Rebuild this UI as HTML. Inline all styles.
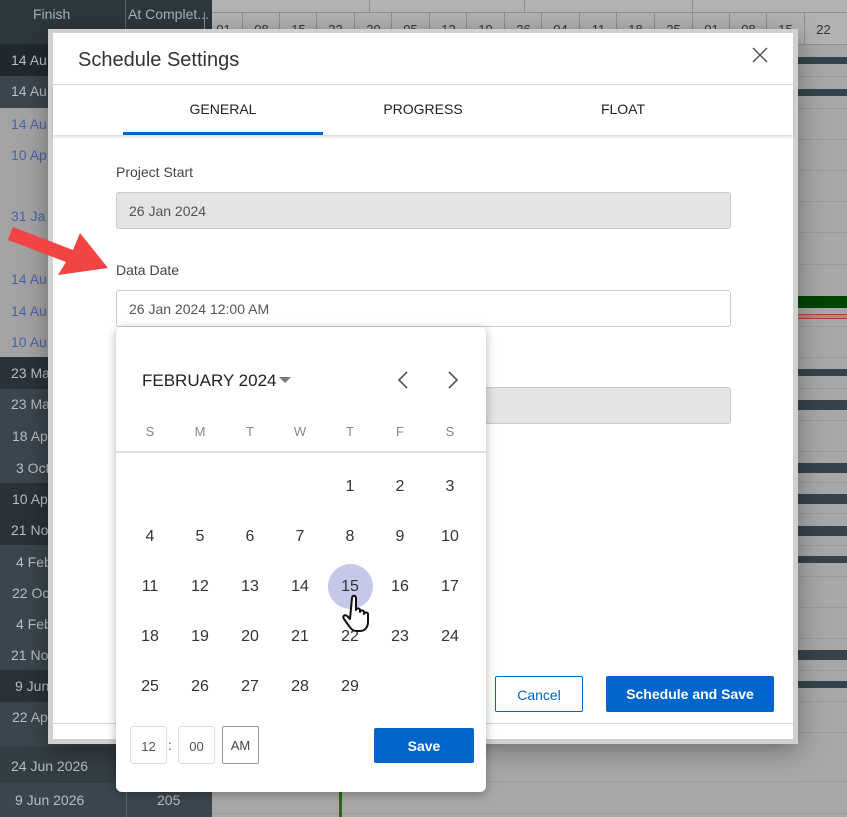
<!DOCTYPE html>
<html><head><meta charset="utf-8"><style>
*{box-sizing:border-box;margin:0;padding:0}
body{width:847px;height:817px;overflow:hidden;position:relative;background:#a7a7a7;font-family:"Liberation Sans",sans-serif}
.abs{position:absolute}
.lt{color:#b9bfc3;font-size:14px;position:absolute;white-space:nowrap}
.bl{color:#4a62a6}
.hl{position:absolute;left:212px;right:0;height:1px;background:#9a9a9a}
.bar{position:absolute;left:797px;right:0;background:#36434c}
.dh{position:absolute;top:12px;height:33px;border-left:1px solid #8f8f8f;font-size:13px;color:#333;text-align:center;padding-top:10px;width:38px}
.cal{position:absolute;font-size:16px;color:#333;width:40px;text-align:center}
</style></head><body>
<div class="abs" style="left:0;top:0;width:212px;height:817px;background:#3a454d"></div>
<div class="abs" style="left:0;top:0;width:212px;height:44px;background:#2d373e"></div>
<div class="abs" style="left:125px;top:0;width:1px;height:44px;background:#59646b"></div>
<div class="lt" style="left:33px;top:6px;color:#a9b1b6">Finish</div>
<div class="lt" style="left:128px;top:6px;color:#a9b1b6">At Complet...</div>
<div class="abs" style="left:0;top:44px;width:212px;height:32px;background:#22292e"></div>
<div class="abs" style="left:0;top:108px;width:212px;height:249px;background:#a3a3a3"></div>
<div class="abs" style="left:0;top:357px;width:212px;height:32px;background:#2a3238"></div>
<div class="abs" style="left:0;top:483px;width:212px;height:62px;background:#2a3238"></div>
<div class="abs" style="left:0;top:670px;width:212px;height:32px;background:#2a3238"></div>
<div class="abs" style="left:0;top:747px;width:212px;height:36px;background:#333d44"></div>
<div class="abs" style="left:126px;top:783px;width:1px;height:34px;background:#59646b"></div>
<div class="lt" style="left:11px;top:52px">14 Au</div>
<div class="lt" style="left:11px;top:83px">14 Au</div>
<div class="lt bl" style="left:11px;top:116px">14 Au</div>
<div class="lt bl" style="left:11px;top:147px">10 Ap</div>
<div class="lt bl" style="left:11px;top:208px">31 Ja</div>
<div class="lt bl" style="left:11px;top:271px">14 Au</div>
<div class="lt bl" style="left:11px;top:303px">14 Au</div>
<div class="lt bl" style="left:11px;top:334px">10 Au</div>
<div class="lt" style="left:11px;top:365px">23 Ma</div>
<div class="lt" style="left:11px;top:396px">23 Ma</div>
<div class="lt" style="left:12px;top:428px">18 Ap</div>
<div class="lt" style="left:16px;top:460px">3 Oct</div>
<div class="lt" style="left:12px;top:491px">10 Ap</div>
<div class="lt" style="left:11px;top:522px">21 No</div>
<div class="lt" style="left:16px;top:554px">4 Feb</div>
<div class="lt" style="left:12px;top:585px">22 Oc</div>
<div class="lt" style="left:16px;top:616px">4 Feb</div>
<div class="lt" style="left:11px;top:647px">21 No</div>
<div class="lt" style="left:15px;top:678px">9 Jun</div>
<div class="lt" style="left:12px;top:709px">22 Ap</div>
<div class="lt" style="left:11px;top:758px">24 Jun 2026</div>
<div class="lt" style="left:15px;top:792px">9 Jun 2026</div>
<div class="lt" style="left:157px;top:792px">205</div>
<div class="abs" style="left:212px;top:0;right:0;height:45px;background:#b2b2b2;border-bottom:1px solid #8f8f8f"></div>
<div class="abs" style="left:212px;top:12px;right:0;height:1px;background:#8f8f8f"></div>
<div class="abs" style="left:369px;top:0;width:1px;height:12px;background:#8f8f8f"></div>
<div class="abs" style="left:524px;top:0;width:1px;height:12px;background:#8f8f8f"></div>
<div class="abs" style="left:692px;top:0;width:1px;height:12px;background:#8f8f8f"></div>
<div class="dh" style="left:204px">01</div><div class="dh" style="left:242px">08</div><div class="dh" style="left:279px">15</div><div class="dh" style="left:316px">22</div><div class="dh" style="left:354px">29</div><div class="dh" style="left:391px">05</div><div class="dh" style="left:429px">12</div><div class="dh" style="left:466px">19</div><div class="dh" style="left:504px">26</div><div class="dh" style="left:541px">04</div><div class="dh" style="left:579px">11</div><div class="dh" style="left:616px">18</div><div class="dh" style="left:654px">25</div><div class="dh" style="left:692px">01</div><div class="dh" style="left:729px">08</div><div class="dh" style="left:766px">15</div><div class="dh" style="left:804px">22</div>
<div class="hl" style="top:76px"></div><div class="hl" style="top:108px"></div><div class="hl" style="top:139px"></div><div class="hl" style="top:170px"></div><div class="hl" style="top:201px"></div><div class="hl" style="top:232px"></div><div class="hl" style="top:264px"></div><div class="hl" style="top:326px"></div><div class="hl" style="top:357px"></div><div class="hl" style="top:388px"></div><div class="hl" style="top:420px"></div><div class="hl" style="top:451px"></div><div class="hl" style="top:482px"></div><div class="hl" style="top:513px"></div><div class="hl" style="top:545px"></div><div class="hl" style="top:576px"></div><div class="hl" style="top:607px"></div><div class="hl" style="top:638px"></div><div class="hl" style="top:670px"></div><div class="hl" style="top:701px"></div><div class="hl" style="top:732px"></div><div class="hl" style="top:781px"></div><div class="hl" style="top:813px"></div>
<div class="bar" style="top:57px;height:7px"></div>
<div class="bar" style="top:89px;height:7px"></div>
<div class="abs" style="left:797px;right:0;top:296px;height:12px;background:#004400"></div>
<div class="abs" style="left:797px;right:0;top:314px;height:5px;background:#a89070;border-top:1px solid #b04040;border-bottom:1px solid #b04040"></div>
<div class="bar" style="top:369px;height:7px"></div>
<div class="bar" style="top:400px;height:10px"></div>
<div class="bar" style="top:463px;height:10px"></div>
<div class="bar" style="top:494px;height:10px"></div>
<div class="bar" style="top:526px;height:10px"></div>
<div class="bar" style="top:556px;height:7px"></div>
<div class="bar" style="top:650px;height:10px"></div>
<div class="bar" style="top:681px;height:7px"></div>
<div class="abs" style="left:339px;top:785px;width:3px;height:32px;background:#0a7a1a"></div>
<!-- modal -->
<div class="abs" style="left:48px;top:29px;width:750px;height:715px;background:#d0d0d0;box-shadow:0 6px 24px rgba(0,0,0,.35)"></div>
<div class="abs" style="left:53px;top:33px;width:740px;height:706px;background:#fff"></div>
<div class="abs" style="left:78px;top:49px;font-size:20px;color:#333">Schedule Settings</div>
<svg class="abs" style="left:752px;top:47px" width="16" height="16"><path d="M1 1L15 15M15 1L1 15" stroke="#555" stroke-width="1.5"/></svg>
<div class="abs" style="left:53px;top:84px;width:740px;height:1px;background:#d6d6d6"></div>
<div class="abs" style="left:53px;top:85px;width:740px;height:50px;box-shadow:0 2px 3px rgba(0,0,0,.15);background:#fff"></div>
<div class="abs" style="left:123px;top:101px;width:200px;text-align:center;font-size:14px;color:#222">GENERAL</div>
<div class="abs" style="left:323px;top:101px;width:200px;text-align:center;font-size:14px;color:#222">PROGRESS</div>
<div class="abs" style="left:523px;top:101px;width:200px;text-align:center;font-size:14px;color:#222">FLOAT</div>
<div class="abs" style="left:123px;top:132px;width:200px;height:3px;background:#0066cc"></div>
<div class="abs" style="left:116px;top:164px;font-size:14px;color:#444">Project Start</div>
<div class="abs" style="left:116px;top:192px;width:615px;height:37px;background:#e4e4e4;border:1px solid #ccc;border-radius:3px;font-size:14px;color:#555;padding:10px 12px">26 Jan 2024</div>
<div class="abs" style="left:116px;top:262px;font-size:14px;color:#444">Data Date</div>
<div class="abs" style="left:116px;top:290px;width:615px;height:37px;background:#fff;border:1px solid #ccc;border-radius:3px;font-size:14px;color:#555;padding:10px 12px">26 Jan 2024 12:00 AM</div>
<div class="abs" style="left:300px;top:387px;width:431px;height:37px;background:#e4e4e4;border:1px solid #ccc;border-radius:3px"></div>
<div class="abs" style="left:495px;top:676px;width:88px;height:36px;border:1px solid #0066cc;border-radius:2px;color:#0066cc;font-size:14px;text-align:center;padding-top:10px">Cancel</div>
<div class="abs" style="left:606px;top:676px;width:168px;height:36px;background:#0066cc;border-radius:2px;color:#fff;font-size:14px;font-weight:bold;text-align:center;padding-top:10px">Schedule and Save</div>
<div class="abs" style="left:53px;top:723px;width:740px;height:1px;background:#d6d6d6"></div>
<!-- arrow -->
<svg class="abs" style="left:0;top:220px" width="120" height="70"><polygon points="13,7 73,30 80,13 108,48 58,55 66,42 8,20" fill="#f24444"/></svg>
<!-- calendar -->
<div class="abs" style="left:116px;top:327px;width:370px;height:465px;background:#fff;border-radius:6px;box-shadow:0 2px 10px rgba(0,0,0,.3)"></div>
<div class="abs" style="left:142px;top:371px;font-size:17px;color:#222">FEBRUARY 2024</div>
<svg class="abs" style="left:279px;top:377px" width="12" height="8"><path d="M0 0H12L6 6Z" fill="#777"/></svg>
<svg class="abs" style="left:397px;top:371px" width="12" height="18"><path d="M10 1L2 9L10 17" stroke="#555" stroke-width="1.6" fill="none"/></svg>
<svg class="abs" style="left:447px;top:371px" width="12" height="18"><path d="M2 1L10 9L2 17" stroke="#555" stroke-width="1.6" fill="none"/></svg>
<div class="cal" style="left:130px;top:424px;font-size:13px;color:#888">S</div><div class="cal" style="left:180px;top:424px;font-size:13px;color:#888">M</div><div class="cal" style="left:230px;top:424px;font-size:13px;color:#888">T</div><div class="cal" style="left:280px;top:424px;font-size:13px;color:#888">W</div><div class="cal" style="left:330px;top:424px;font-size:13px;color:#888">T</div><div class="cal" style="left:380px;top:424px;font-size:13px;color:#888">F</div><div class="cal" style="left:430px;top:424px;font-size:13px;color:#888">S</div>
<div class="abs" style="left:116px;top:451px;width:370px;height:2px;background:#e0e0e0"></div>
<div class="abs" style="left:328px;top:564px;width:45px;height:45px;border-radius:50%;background:#c5c8e8"></div>
<div class="cal" style="left:330px;top:478px">1</div><div class="cal" style="left:380px;top:478px">2</div><div class="cal" style="left:430px;top:478px">3</div>
<div class="cal" style="left:130px;top:528px">4</div><div class="cal" style="left:180px;top:528px">5</div><div class="cal" style="left:230px;top:528px">6</div><div class="cal" style="left:280px;top:528px">7</div><div class="cal" style="left:330px;top:528px">8</div><div class="cal" style="left:380px;top:528px">9</div><div class="cal" style="left:430px;top:528px">10</div>
<div class="cal" style="left:130px;top:578px">11</div><div class="cal" style="left:180px;top:578px">12</div><div class="cal" style="left:230px;top:578px">13</div><div class="cal" style="left:280px;top:578px">14</div><div class="cal" style="left:330px;top:578px">15</div><div class="cal" style="left:380px;top:578px">16</div><div class="cal" style="left:430px;top:578px">17</div>
<div class="cal" style="left:130px;top:628px">18</div><div class="cal" style="left:180px;top:628px">19</div><div class="cal" style="left:230px;top:628px">20</div><div class="cal" style="left:280px;top:628px">21</div><div class="cal" style="left:330px;top:628px">22</div><div class="cal" style="left:380px;top:628px">23</div><div class="cal" style="left:430px;top:628px">24</div>
<div class="cal" style="left:130px;top:678px">25</div><div class="cal" style="left:180px;top:678px">26</div><div class="cal" style="left:230px;top:678px">27</div><div class="cal" style="left:280px;top:678px">28</div><div class="cal" style="left:330px;top:678px">29</div>
<svg class="abs" style="left:340px;top:594px" width="40" height="42"><path d="M12 4c0-3 4-3 4 0v12c0-2 4-2 4 0v2c0-2 4-2 4 0v2c0-2 4-2 4 0v8c0 5-3 9-8 9h-4c-3 0-5-2-7-5l-5-7c-2-3 1-5 3-3l3 3z" fill="#fff" stroke="#111" stroke-width="2" stroke-linejoin="round"/></svg>
<div class="abs" style="left:130px;top:726px;width:37px;height:38px;border:1px solid #ddd;border-radius:3px;font-size:13px;color:#555;text-align:center;padding-top:12px">12</div>
<div class="abs" style="left:168px;top:737px;font-size:14px;color:#555">:</div>
<div class="abs" style="left:178px;top:726px;width:37px;height:38px;border:1px solid #ddd;border-radius:3px;font-size:13px;color:#555;text-align:center;padding-top:12px">00</div>
<div class="abs" style="left:222px;top:726px;width:37px;height:38px;border:1px solid #999;border-radius:2px;font-size:13px;color:#444;text-align:center;padding-top:11px">AM</div>
<div class="abs" style="left:374px;top:728px;width:100px;height:35px;background:#0066cc;border-radius:2px;color:#fff;font-size:14px;font-weight:bold;text-align:center;padding-top:10px">Save</div>
</body></html>
